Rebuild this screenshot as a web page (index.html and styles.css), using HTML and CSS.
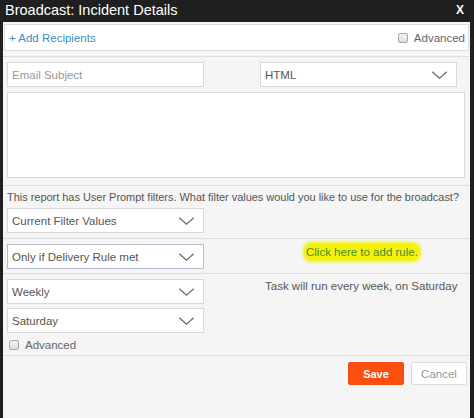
FILE: index.html
```html
<!DOCTYPE html>
<html>
<head>
<meta charset="utf-8">
<link rel="stylesheet" href="styles.css">
</head>
<body>
<div class="dialog">
  <div class="titlebar">
    <span class="title">Broadcast: Incident Details</span>
    <span class="close">X</span>
  </div>
  <div class="content">
    <div class="recipients">
      <span class="add-link">+ Add Recipients</span>
      <label class="check"><span class="box"></span>Advanced</label>
    </div>
    <div class="section sec-email">
      <div class="row-two">
        <div class="field input placeholder">Email Subject</div>
        <div class="field select"><span>HTML</span><svg class="chev" viewBox="0 0 20 10"><path d="M1 1 L10 9 L19 1" /></svg></div>
      </div>
      <div class="textarea"></div>
    </div>
    <div class="section sec-filter">
      <p class="note">This report has User Prompt filters. What filter values would you like to use for the broadcast?</p>
      <div class="field select"><span>Current Filter Values</span><svg class="chev" viewBox="0 0 20 10"><path d="M1 1 L10 9 L19 1" /></svg></div>
    </div>
    <div class="section sec-rule">
      <div class="field select focus"><span>Only if Delivery Rule met</span><svg class="chev" viewBox="0 0 20 10"><path d="M1 1 L10 9 L19 1" /></svg></div>
      <div class="rule-link"><span class="hl">Click here to add rule.</span></div>
    </div>
    <div class="section sec-sched">
      <div class="sched-left">
        <div class="field select"><span>Weekly</span><svg class="chev" viewBox="0 0 20 10"><path d="M1 1 L10 9 L19 1" /></svg></div>
        <div class="field select"><span>Saturday</span><svg class="chev" viewBox="0 0 20 10"><path d="M1 1 L10 9 L19 1" /></svg></div>
        <label class="check check-adv"><span class="box"></span>Advanced</label>
      </div>
      <div class="sched-note">Task will run every week, on Saturday</div>
    </div>
    <div class="actions">
      <button class="btn save">Save</button>
      <button class="btn cancel">Cancel</button>
    </div>
  </div>
</div>
</body>
</html>
```
FILE: styles.css
```css
* { box-sizing: border-box; }
html, body { margin: 0; padding: 0; }
body {
  width: 474px;
  height: 418px;
  overflow: hidden;
  font-family: "Liberation Sans", Arial, sans-serif;
  background: #1c1c1c;
}
.dialog {
  width: 474px;
  height: 418px;
  background: #1f1f1f;
  padding: 0 4px 0 3px;
  display: flex;
  flex-direction: column;
}
.titlebar {
  height: 22px;
  display: flex;
  align-items: center;
  justify-content: space-between;
  color: #fff;
  padding: 0 6px 2px 2px;
}
.title { font-size: 14.5px; }
.close { font-size: 12px; font-weight: bold; }
.content {
  flex: 1;
  background: #f5f5f5;
  padding: 2px 0 0 0;
}
.recipients {
  margin: 0 1px 0 1px;
  height: 27px;
  background: #fff;
  border: 1px solid #dcdcdc;
  display: flex;
  align-items: center;
  justify-content: space-between;
  padding: 0 3px 0 4px;
}
.add-link { color: #3d8dbf; font-size: 11.5px; }
.check {
  display: flex;
  align-items: center;
  color: #666;
  font-size: 11.5px;
}
.box {
  width: 10px;
  height: 10px;
  border: 1px solid #a8a8a8;
  border-radius: 2px;
  background: linear-gradient(#f4f4f4, #dedede);
  margin-right: 6px;
}
.section {
  border-top: 1px solid #dedede;
  padding: 0 4px 0 4px;
}
.sec-email { margin-top: 5px; padding-top: 5px; padding-bottom: 7px; }
.row-two { display: flex; justify-content: space-between; padding-right: 9px; }
.field {
  width: 197px;
  height: 25px;
  background: #fff;
  border: 1px solid #d8d8d8;
  display: flex;
  align-items: center;
  justify-content: space-between;
  padding: 0 8px 0 4px;
  font-size: 11.5px;
  color: #555;
}
.placeholder { color: #999; }
.chev { width: 17px; height: 8px; fill: none; stroke: #666; stroke-width: 1.5; }
.textarea {
  margin-top: 5px;
  height: 86px;
  background: #fff;
  border: 1px solid #d8d8d8;
  margin-right: 1px;
}
.sec-filter { padding-top: 5px; padding-bottom: 5px; }
.note { margin: 0 0 5px 0; font-size: 11px; letter-spacing: -0.03px; color: #555; white-space: nowrap; }
.sec-rule { display: flex; padding-top: 5px; padding-bottom: 4px; }
.focus { border-color: #b9bcce; }
.rule-link { padding-left: 101px; padding-top: 2px; font-size: 11.5px; }
.hl {
  color: #4c8a2c;
  background: #f2f20c;
  padding: 2px 1px;
  border-radius: 6px;
  box-shadow: 0 0 3px 2px #f2f20c;
}
.sec-sched { display: flex; padding-top: 5px; padding-bottom: 4px; }
.sched-left { display: flex; flex-direction: column; gap: 4px; }
.check-adv { padding-left: 2px; padding-top: 2px; }
.sched-note { padding-left: 61px; padding-top: 1px; font-size: 11.5px; color: #555; }
.actions {
  border-top: 1px solid #dedede;
  display: flex;
  justify-content: flex-end;
  gap: 7px;
  padding: 6px 3px 0 0;
}
.btn {
  height: 23px;
  width: 56px;
  font-family: inherit;
  font-size: 11.5px;
  border-radius: 2px;
}
.save { background: #fc4e0f; color: #fff; border: 1px solid #f04a10; font-weight: bold; font-size: 11px; }
.cancel { background: #fff; color: #999; border: 1px solid #dcdcdc; }
```
